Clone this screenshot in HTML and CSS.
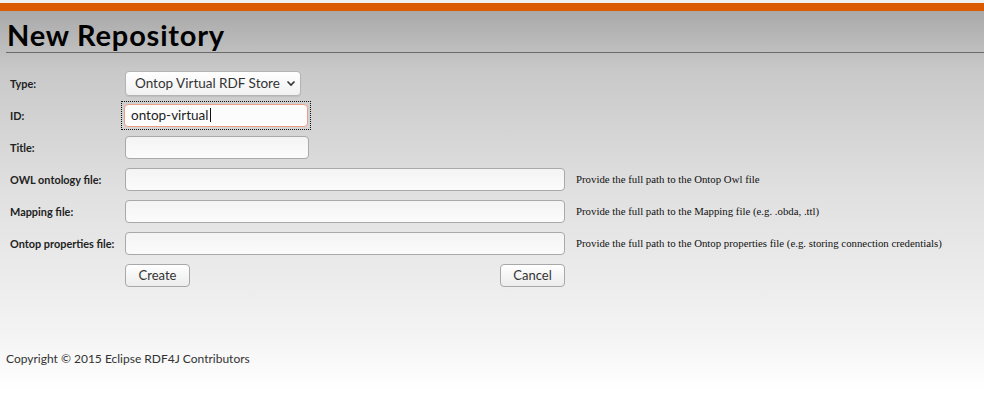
FILE: index.html
```html
<!DOCTYPE html>
<html>
<head>
<meta charset="utf-8">
<title>New Repository</title>
<link rel="stylesheet" href="styles.css">
</head>
<body>
<div class="topstrip"></div>
<div class="page">
  <header class="header">
    <h1 class="title">New Repository</h1>
  </header>
  <form class="form">
    <div class="row">
      <label class="label">Type:</label>
      <div class="control">
        <div class="select">Ontop Virtual RDF Store
          <svg class="chev" width="10" height="7" viewBox="0 0 10 7"><path d="M1.5 1.5 L5 5 L8.5 1.5" fill="none" stroke="#333" stroke-width="1.6"/></svg>
        </div>
      </div>
    </div>
    <div class="row">
      <label class="label">ID:</label>
      <div class="control">
        <div class="focus-wrap"><div class="input short focused">ontop-virtual<span class="caret"></span></div></div>
      </div>
    </div>
    <div class="row">
      <label class="label">Title:</label>
      <div class="control"><div class="input short"></div></div>
    </div>
    <div class="row">
      <label class="label">OWL ontology file:</label>
      <div class="control"><div class="input wide"></div></div>
      <span class="help">Provide the full path to the Ontop Owl file</span>
    </div>
    <div class="row">
      <label class="label">Mapping file:</label>
      <div class="control"><div class="input wide"></div></div>
      <span class="help">Provide the full path to the Mapping file (e.g. .obda, .ttl)</span>
    </div>
    <div class="row">
      <label class="label">Ontop properties file:</label>
      <div class="control"><div class="input wide"></div></div>
      <span class="help">Provide the full path to the Ontop properties file (e.g. storing connection credentials)</span>
    </div>
    <div class="row">
      <span class="label"></span>
      <div class="control buttons">
        <button type="button" class="btn">Create</button>
        <button type="button" class="btn">Cancel</button>
      </div>
    </div>
  </form>
  <footer class="footer">Copyright © 2015 Eclipse RDF4J Contributors</footer>
</div>
</body>
</html>
```

FILE: styles.css
```css
html, body {
  margin: 0;
  padding: 0;
}
body {
  width: 984px;
  height: 419px;
  overflow: hidden;
  background: #fff;
  font-family: "Lato", "Open Sans", sans-serif;
  color: #222;
}
.topstrip {
  height: 3px;
  background: #f0f0f0;
  border-bottom: 8px solid #da5b00;
}
.page {
  background: linear-gradient(to bottom, #a9a9a9 0px, #c9c9c9 60px, #e0e0e0 180px, #f3f3f3 320px, #ffffff 380px);
  height: 408px;
  padding-left: 6px;
}
.header {
  border-bottom: 1px solid #6a6a6a;
  height: 41px;
  display: flex;
  align-items: flex-end;
}
.title {
  margin: 0 0 0 1px;
  font-size: 29px;
  font-weight: 700;
  color: #000;
  line-height: 30px;
  padding-bottom: 2px;
  letter-spacing: 0.8px;
}
.form {
  margin-top: 14px;
  display: flex;
  flex-direction: column;
}
.row {
  height: 32px;
  display: flex;
  align-items: center;
}
.label {
  width: 119px;
  padding-left: 4px;
  box-sizing: border-box;
  font-size: 10.9px;
  font-weight: 700;
  color: #222;
}
.control {
  display: flex;
  align-items: center;
}
.select {
  width: 176px;
  height: 25px;
  box-sizing: border-box;
  border: 1px solid #b4b4b4;
  border-radius: 4px;
  background: linear-gradient(to bottom, #ffffff, #f1f1f1);
  box-shadow: 0 1px 1px rgba(0,0,0,0.08);
  font-size: 13.5px;
  color: #333;
  display: flex;
  align-items: center;
  padding-left: 9px;
  gap: 6px;
}
.chev { margin-top: 1px; }
.input {
  height: 23px;
  box-sizing: border-box;
  border: 1px solid #a9a9a9;
  border-radius: 4px;
  background: linear-gradient(to bottom, #f4f4f4, #fbfbfb);
  font-size: 13.5px;
  color: #222;
  padding-left: 6px;
  display: flex;
  align-items: center;
}
.short { width: 184px; }
.wide { width: 440px; }
.focus-wrap {
  outline: 1px dotted #111;
  outline-offset: 0px;
  padding: 2px;
  margin-left: -3px;
}
.focused {
  border-color: #ec9f86;
  background: #fcfcfc;
}
.caret {
  display: inline-block;
  width: 1px;
  height: 14px;
  background: #111;
  margin-left: 1px;
}
.help {
  margin-left: 11px;
  font-family: "Liberation Serif", serif;
  font-size: 10.8px;
  color: #111;
}
.buttons {
  width: 440px;
  justify-content: space-between;
}
.btn {
  height: 23px;
  width: 65px;
  border: 1px solid #a8a8a8;
  border-radius: 4px;
  background: linear-gradient(to bottom, #ffffff, #ececec);
  font-family: "Lato", "Open Sans", sans-serif;
  font-size: 13px;
  color: #333;
  padding: 0;
}
.footer {
  margin-top: 60px;
  font-size: 12px;
  color: #333;
}
```
